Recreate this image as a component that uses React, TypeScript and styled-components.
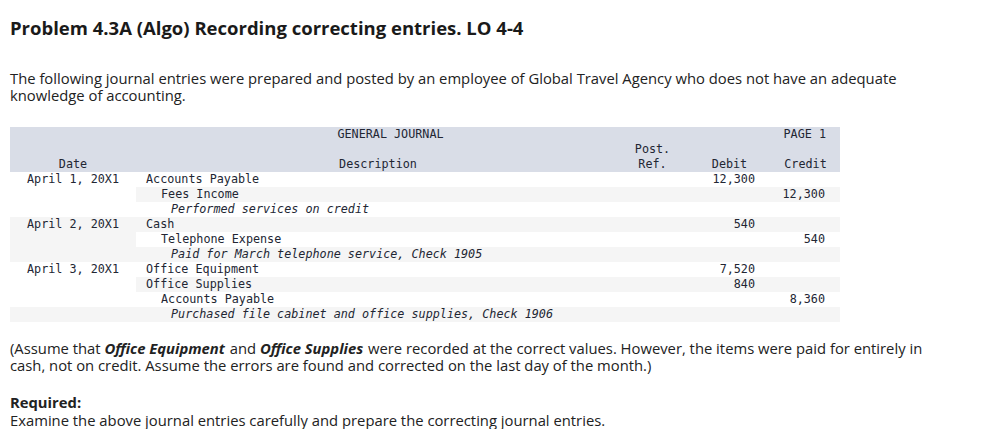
import React from "react";
import styled, { createGlobalStyle } from "styled-components";

const Global = createGlobalStyle`
  body { margin: 0; background: #fff; }
`;

const Page = styled.div`
  padding: 0 10px;
  font-family: "Open Sans", Lato, sans-serif;
  color: #1c1c1c;
`;

const Title = styled.h1`
  margin: 0;
  padding-top: 17px;
  font-size: 18.5px;
  line-height: 22px;
  font-weight: 700;
  color: #1a1a1a;
`;

const Para = styled.p<{ $top: number }>`
  margin: ${(p) => p.$top}px 0 0;
  font-size: 14.8px;
  line-height: 17px;
  color: #222;
  width: 945px;
`;

const Table = styled.table`
  margin-top: 23px;
  border-collapse: collapse;
  table-layout: fixed;
  width: 830px;
  font-family: "DejaVu Sans Mono", monospace;
  font-size: 11.75px;
  color: #222633;
`;

const Head = styled.thead`
  background: #d9dde7;
`;

const HCell = styled.th<{ $align?: string; $pr?: number; $pl?: number }>`
  height: 15px;
  padding: 0 ${(p) => p.$pr ?? 0}px 0 ${(p) => p.$pl ?? 0}px;
  font-weight: 400;
  line-height: 15px;
  text-align: ${(p) => p.$align ?? "center"};
  vertical-align: middle;
  white-space: nowrap;
`;

const Row = styled.tr<{ $shade: boolean }>`
  background: ${(p) => (p.$shade ? "#f5f5f5" : "#fff")};
`;

const DateCell = styled.td<{ $shade: boolean }>`
  height: 15px;
  padding: 0;
  line-height: 15px;
  text-align: center;
  vertical-align: top;
  white-space: nowrap;
  background: ${(p) => (p.$shade ? "#f5f5f5" : "#fff")};
`;

const Desc = styled.td<{ $indent: number; $italic?: boolean }>`
  height: 15px;
  padding: 0 0 0 ${(p) => 10 + p.$indent}px;
  line-height: 15px;
  white-space: nowrap;
  font-style: ${(p) => (p.$italic ? "italic" : "normal")};
`;

const Num = styled.td<{ $pr: number }>`
  height: 15px;
  padding: 0 ${(p) => p.$pr}px 0 0;
  line-height: 15px;
  text-align: right;
  white-space: nowrap;
`;

const Blank = styled.td`
  padding: 0;
  height: 15px;
`;

const Strong = styled.span`
  font-weight: 700;
  font-style: italic;
  padding-right: 1px;
`;

const Label = styled.div`
  margin-top: 19px;
  font-size: 14.8px;
  line-height: 18px;
  font-weight: 700;
  color: #222;
`;

const Line = styled.div`
  font-size: 14.8px;
  line-height: 18px;
  color: #222;
`;

type Line = { text: string; level: 0 | 1 | 2; debit?: string; credit?: string };
type Entry = { date: string; lines: Line[]; memo: string };

const entries: Entry[] = [
  {
    date: "April 1, 20X1",
    lines: [
      { text: "Accounts Payable", level: 0, debit: "12,300" },
      { text: "Fees Income", level: 1, credit: "12,300" },
    ],
    memo: "Performed services on credit",
  },
  {
    date: "April 2, 20X1",
    lines: [
      { text: "Cash", level: 0, debit: "540" },
      { text: "Telephone Expense", level: 1, credit: "540" },
    ],
    memo: "Paid for March telephone service, Check 1905",
  },
  {
    date: "April 3, 20X1",
    lines: [
      { text: "Office Equipment", level: 0, debit: "7,520" },
      { text: "Office Supplies", level: 0, debit: "840" },
      { text: "Accounts Payable", level: 1, credit: "8,360" },
    ],
    memo: "Purchased file cabinet and office supplies, Check 1906",
  },
];

export default function App() {
  let idx = 0;
  const rows: React.ReactNode[] = [];
  entries.forEach((e, ei) => {
    const startShade = idx % 2 === 1;
    e.lines.forEach((l, li) => {
      const shade = idx % 2 === 1;
      rows.push(
        <Row key={`${ei}-${li}`} $shade={shade}>
          {li === 0 && (
            <DateCell rowSpan={e.lines.length} $shade={startShade}>
              {e.date}
            </DateCell>
          )}
          <Desc $indent={l.level === 0 ? 0 : 15}>{l.text}</Desc>
          <Blank />
          <Num $pr={10}>{l.debit ?? ""}</Num>
          <Num $pr={15}>{l.credit ?? ""}</Num>
        </Row>
      );
      idx++;
    });
    const shade = idx % 2 === 1;
    rows.push(
      <Row key={`${ei}-m`} $shade={shade}>
        <Blank />
        <Desc $indent={25} $italic>
          {e.memo}
        </Desc>
        <Blank />
        <Blank />
        <Blank />
      </Row>
    );
    idx++;
  });

  return (
    <Page>
      <Global />
      <Title>Problem 4.3A (Algo) Recording correcting entries. LO 4-4</Title>
      <Para $top={31}>
        The following journal entries were prepared and posted by an employee of Global Travel Agency who does not have an adequate knowledge of accounting.
      </Para>
      <Table>
        <colgroup>
          <col style={{ width: 126 }} />
          <col style={{ width: 484 }} />
          <col style={{ width: 65 }} />
          <col style={{ width: 80 }} />
          <col style={{ width: 75 }} />
        </colgroup>
        <Head>
          <tr>
            <HCell colSpan={4} $pl={6}>GENERAL JOURNAL</HCell>
            <HCell $align="right" $pr={14}>PAGE 1</HCell>
          </tr>
          <tr>
            <HCell />
            <HCell />
            <HCell>Post.</HCell>
            <HCell />
            <HCell />
          </tr>
          <tr>
            <HCell>Date</HCell>
            <HCell>Description</HCell>
            <HCell>Ref.</HCell>
            <HCell $pl={9}>Debit</HCell>
            <HCell $pl={6}>Credit</HCell>
          </tr>
        </Head>
        <tbody>{rows}</tbody>
      </Table>
      <Para $top={18}>
        (Assume that <Strong>Office Equipment</Strong> and <Strong>Office Supplies</Strong> were recorded at the correct values. However, the items were paid for entirely in cash, not on credit. Assume the errors are found and corrected on the last day of the month.)
      </Para>
      <Label>Required:</Label>
      <Line>Examine the above journal entries carefully and prepare the correcting journal entries.</Line>
    </Page>
  );
}
